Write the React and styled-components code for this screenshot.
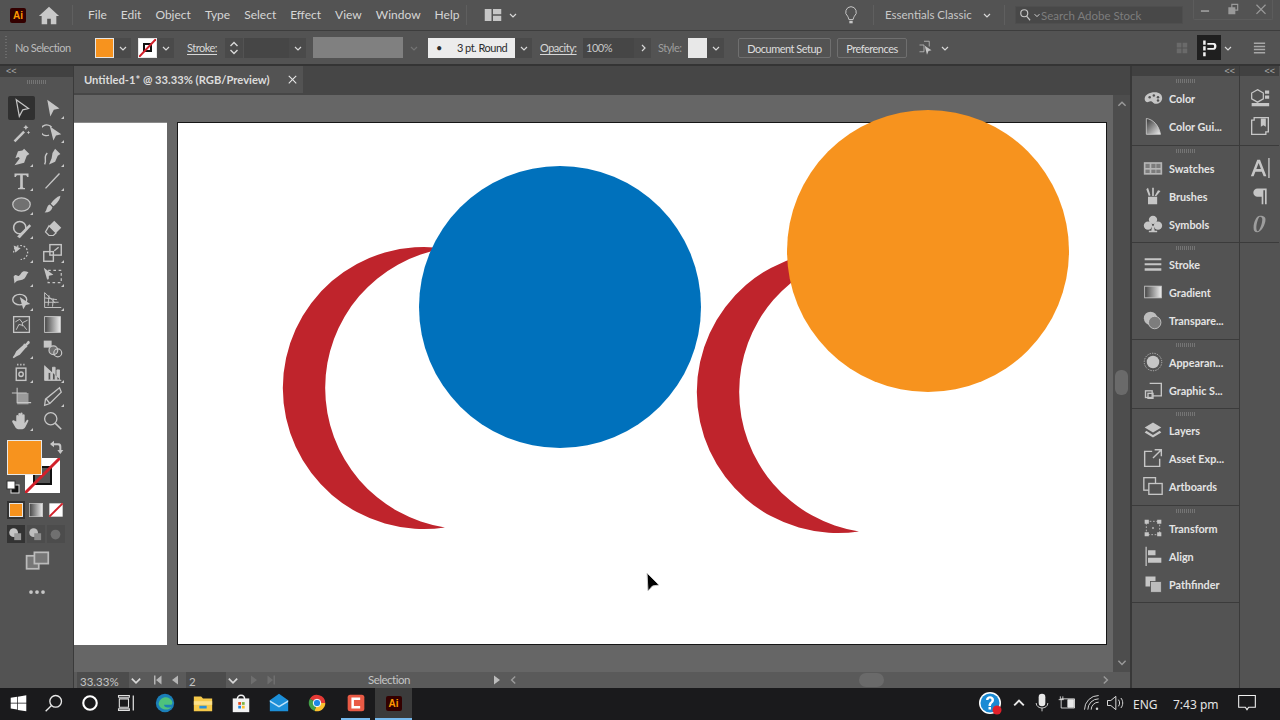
// illustrator workspace screenshot
import React from 'react'
import styled, { createGlobalStyle } from 'styled-components'

const Global = createGlobalStyle`
html, body { margin: 0; padding: 0; background: #535353; }
body { font-family: Lato, "Noto Sans", sans-serif; overflow: hidden; }
`
const Page = styled.div`
width: 1280px;
height: 720px;
display: flex;
flex-direction: column;
background: #535353;
color: #d0d0d0;
overflow: hidden;
`
const Icon = styled.svg`
width: ${p => p.$s || 20}px;
height: ${p => p.$s || 20}px;
flex: none;
color: ${p => p.$c || '#c6c6c6'};
margin-left: ${p => p.$ml || 0}px;
margin-top: ${p => p.$mt || 0}px;
`

/* menu bar */
const MenuBar = styled.div`
height: 30px;
flex: none;
display: flex;
align-items: center;
position: relative;
border-bottom: 1px solid #3d3d3d;
`
const AiLogo = styled.div`
width: 16px;
height: 15px;
margin-left: ${p => p.$ml ?? 10}px;
border-radius: 2px;
background: #330000;
color: #ff9a00;
font: bold 10px/15px "Liberation Sans", sans-serif;
text-align: center;
flex: none;
`
const Sep = styled.div`
width: 1px;
height: 20px;
background: #5f5f5f;
flex: none;
margin-left: ${p => p.$ml || 0}px;
`
const Menus = styled.div`
display: flex;
gap: 14px;
margin-left: 15px;
padding-bottom: 2px;
font-size: 12px;
color: #d6d6d6;
width: 378px;
flex: none;
`
const Workspace = styled.span`
font-size: 11.5px;
color: #c8c8c8;
margin-left: 11px;
padding-bottom: 2px;
width: 88px;
flex: none;
white-space: nowrap;
`
const SearchBox = styled.div`
width: 168px;
height: 18px;
margin-left: 10px;
flex: none;
background: #484848;
border: 1px solid #4e4e4e;
display: flex;
align-items: center;
padding-left: 3px;
box-sizing: border-box;
font-size: 11.5px;
color: #7d7d7d;
`
const WinBox = styled.div`
display: flex;
align-items: center;
gap: 14px;
margin-left: 10px;
padding: 0 4px 1px 4px;
height: 20px;
box-sizing: border-box;
margin-top: -10px;
border: 1px solid #5c5c5c;
border-top: 0;
border-radius: 0 0 2px 2px;
`

/* control bar */
const ControlBar = styled.div`
height: 33px;
flex: none;
display: flex;
align-items: center;
border-bottom: 2px solid #343434;
font-size: 11px;
letter-spacing: -0.5px;
`
const Grip = styled.div`
width: 2px;
height: 24px;
margin-left: 5px;
flex: none;
background: repeating-linear-gradient(#6c6c6c 0 1px, transparent 1px 3px);
`
const Label = styled.span`
margin-left: ${p => p.$ml || 0}px;
width: ${p => (p.$w ? p.$w + 'px' : 'auto')};
color: ${p => p.$c || '#bcbcbc'};
flex: none;
white-space: nowrap;
text-decoration: ${p => (p.$u ? 'underline' : 'none')};
text-underline-offset: 2px;
`
const StatusMode = styled(Label)`
font-size: 11.5px;
letter-spacing: -0.5px;
line-height: 20px;
`
const Swatch = styled.div`
width: ${p => p.$w || 19}px;
height: ${p => p.$h || 20}px;
margin-left: ${p => p.$ml || 0}px;
background: ${p => p.$bg};
border: ${p => (p.$flat ? '0' : '1px solid #e5e5e5')};
box-sizing: border-box;
flex: none;
position: relative;
overflow: hidden;
`
const Drop = styled.div`
width: ${p => p.$w || 17}px;
height: 20px;
margin-left: ${p => p.$ml || 0}px;
background: ${p => p.$bg || '#4a4a4a'};
display: flex;
align-items: center;
justify-content: center;
flex: none;
color: #d0d0d0;
`
const Field = styled.div`
width: ${p => p.$w}px;
height: 20px;
background: #464646;
color: #c8c8c8;
margin-left: ${p => p.$ml || 0}px;
padding-left: 3px;
box-sizing: border-box;
line-height: 20px;
flex: none;
`
const GrayBar = styled.div`
width: 90px;
height: 21px;
background: #808080;
margin-left: 7px;
flex: none;
`
const StrokeProfile = styled.div`
width: 87px;
height: 20px;
margin-left: 6px;
background: #ececec;
color: #2c2c2c;
display: flex;
align-items: center;
gap: 15px;
padding-left: 8px;
box-sizing: border-box;
flex: none;
`
const Btn = styled.div`
height: 20px;
width: ${p => p.$w}px;
margin-left: ${p => p.$ml || 0}px;
border: 1px solid #6f6f6f;
border-radius: 2px;
box-sizing: border-box;
text-align: center;
line-height: 19px;
color: #dedede;
flex: none;
`
const ActiveBox = styled.div`
width: 24px;
height: 25px;
background: #1f1f1f;
margin-left: 8px;
display: flex;
align-items: center;
justify-content: center;
flex: none;
`

/* main workspace */
const Main = styled.div`
flex: 1;
display: flex;
min-height: 0;
`
const Tools = styled.div`
width: 73px;
flex: none;
display: flex;
flex-direction: column;
align-items: center;
border-right: 1px solid #3a3a3a;
box-sizing: content-box;
`
const Strip = styled.div`
height: ${p => p.$h || 11}px;
width: 100%;
flex: none;
background: #414141;
color: #a8a8a8;
font: 9px/10px "Liberation Sans", sans-serif;
padding: 0 ${p => (p.$right ? 4 : 6)}px;
box-sizing: border-box;
text-align: ${p => (p.$right ? 'right' : 'left')};
`
const GripH = styled.div`
width: ${p => p.$w || 20}px;
height: 4px;
margin: ${p => p.$m || '2px auto 0'};
flex: none;
background: repeating-linear-gradient(90deg, #747474 0 1px, transparent 1px 2px);
`
const ToolGrid = styled.div`
display: grid;
grid-template-columns: 27px 27px;
grid-auto-rows: 24px;
column-gap: 4px;
margin-top: 12px;
`
const ToolCell = styled.div`
display: flex;
align-items: center;
justify-content: center;
position: relative;
background: ${p => (p.$on ? '#303030' : 'none')};
border-radius: 2px;
`
const Corner = styled.i`
position: absolute;
right: 2px;
bottom: 1px;
border-left: 3px solid transparent;
border-bottom: 3px solid #c8c8c8;
`
const ColorStack = styled.div`
width: 59px;
height: 58px;
margin-top: 8px;
position: relative;
flex: none;
`
const FillBox = styled.div`
position: absolute;
left: 0;
top: 0;
width: 35px;
height: 35px;
background: #f7931e;
border: 1px solid #e8e8e8;
box-sizing: border-box;
z-index: 2;
`
const StrokeBox = styled.div`
position: absolute;
left: 18px;
top: 18px;
width: 35px;
height: 35px;
background: #fff;
overflow: hidden;
`
const SwapArrow = styled.div`
position: absolute;
left: 41px;
top: 0;
`
const DefaultColors = styled.svg`
position: absolute;
left: -1px;
top: 40px;
`
const MiniRow = styled.div`
display: flex;
gap: 2px;
margin-top: ${p => p.$mt}px;
margin-right: 2px;
flex: none;
`
const MiniCell = styled.div`
width: 18px;
height: 18px;
display: flex;
align-items: center;
justify-content: center;
background: ${p => p.$bg || 'none'};
`

const Center = styled.div`
flex: 1;
display: flex;
flex-direction: column;
min-width: 0;
`
const TabRow = styled.div`
height: 29px;
flex: none;
background: #464646;
display: flex;
`
const Tab = styled.div`
width: 229px;
height: 27px;
background: #535353;
display: flex;
align-items: center;
justify-content: space-between;
padding: 0 6px 0 10px;
box-sizing: border-box;
font-size: 11.2px;
font-weight: 700;
color: #dcdcdc;
`
const DocRow = styled.div`
flex: 1;
display: flex;
min-height: 0;
`
const Canvas = styled.div`
flex: 1;
background: #666;
position: relative;
`
const Artboard = styled.div`
position: absolute;
top: 27px;
height: 523px;
left: ${p => p.$l}px;
width: ${p => p.$w}px;
background: #fff;
box-sizing: border-box;
border: ${p => (p.$edge ? '1px solid #161616' : '0')};
border-top: 1px solid ${p => (p.$edge ? '#161616' : '#8a8a8a')};
`
const Art = styled.svg`
position: absolute;
left: 0;
top: 0;
`
const VScroll = styled.div`
width: 17px;
flex: none;
background: #4d4d4d;
display: flex;
flex-direction: column;
align-items: center;
justify-content: space-between;
padding: 3px 0 4px;
box-sizing: border-box;
position: relative;
`
const VThumb = styled.div`
position: absolute;
top: 275px;
left: 2px;
width: 13px;
height: 25px;
border-radius: 6px;
background: #6a6a6a;
`
const StatusRow = styled.div`
height: 16px;
flex: none;
background: #5a5a5a;
display: flex;
align-items: center;
font-size: 11.5px;
color: #c4c4c4;
position: relative;
`
const StatusField = styled.div`
width: ${p => p.$w}px;
height: 16px;
margin-left: ${p => p.$ml || 0}px;
background: #4c4c4c;
line-height: 20px;
padding-left: 3px;
box-sizing: border-box;
overflow: hidden;
flex: none;
`
const HThumb = styled.div`
position: absolute;
left: 785px;
top: 1px;
width: 25px;
height: 14px;
border-radius: 7px;
background: #6a6a6a;
`

/* right dock */
const Dock = styled.div`
width: 148px;
flex: none;
border-left: 2px solid #383838;
display: flex;
`
const DockCol = styled.div`
width: ${p => p.$w}px;
flex: none;
display: flex;
flex-direction: column;
border-right: ${p => (p.$line ? '1px solid #3a3a3a' : '0')};
`
const PanelGroup = styled.div`
height: ${p => p.$h}px;
flex: none;
position: relative;
padding-top: ${p => p.$pad}px;
box-sizing: border-box;
border-bottom: 1px solid #3b3b3b;
`
const GroupGrip = styled(GripH)`
position: absolute;
top: 3px;
left: 0;
right: 0;
margin: 0 auto;
`
const PanelItem = styled.div`
height: 28px;
display: flex;
align-items: center;
font-size: 10.8px;
font-weight: 700;
color: #e4e4e4;
white-space: nowrap;
`
const PanelIcon = styled.div`
width: 22px;
margin: 0 5px 0 10px;
display: flex;
justify-content: center;
flex: none;
`
const DockIcon = styled.div`
height: 28px;
display: flex;
align-items: center;
justify-content: center;
`

/* taskbar */
const Taskbar = styled.div`
height: 32px;
flex: none;
background: #1a1a1c;
display: flex;
align-items: center;
color: #e8e8e8;
position: relative;
`
const TaskSlot = styled.div`
width: ${p => p.$w || 38}px;
height: 32px;
flex: none;
margin-left: ${p => p.$ml || 0}px;
display: flex;
align-items: center;
justify-content: center;
box-sizing: border-box;
background: ${p => (p.$on ? '#3b3b3b' : 'none')};
border-bottom: 2px solid ${p => (p.$line ? '#76b9ed' : 'transparent')};
`
const Tray = styled.span`
font-size: ${p => p.$fs || 12}px;
font-family: "Noto Sans", sans-serif;
margin-left: ${p => p.$ml || 0}px;
width: ${p => p.$w}px;
flex: none;
white-space: nowrap;
color: #e4e4e4;
`

const Chevron = ({ s = 10, c = '#d8d8d8', dir = 'down', ml }) => {
  const d = { down: 'M2 4l3 3 3-3', up: 'M2 6.5l3-3 3 3', right: 'M4 2l3 3-3 3', left: 'M6 2L3 5l3 3' }[dir]
  return (
    <Icon $s={s} $ml={ml} viewBox="0 0 10 10" fill="none" stroke={c} strokeWidth="1.2"><path d={d} /></Icon>
  )
}

const G = ({ children, s = 20, box = 24, ...rest }) => (
  <Icon $s={s} viewBox={`0 0 ${box} ${box}`} fill="currentColor" stroke="none" {...rest}>{children}</Icon>
)
const line = { fill: 'none', stroke: 'currentColor', strokeWidth: 1.6 }

const toolIcons = [
  [<path d="M6 2l14 10-6.500 1.500L9.500 21z" fill="none" stroke="currentColor" strokeWidth="1.400" />, true, false],
  [<path d="M6 2l14 10-6.500 1.500L9.500 21z" />, false, true],
  [<g><path d="M3 21L14 10l2 2L5 23z" /><path d="M17 3l1 2 2 1-2 1-1 2-1-2-2-1 2-1zM20 10l.7 1.300 1.300.7-1.300.7-.7 1.300-.7-1.300-1.300-.7 1.300-.7z" /></g>, false, false],
  [<g><path d="M11 6a7 6 0 1 0-3 9" {...line} /><path d="M9 5l13 9-6 1.500L13 21z" /></g>, false, true],
  [<path d="M15 3l6 6-3 2-3 8-11 3 6-8-1.500-1.500L5 14l3-8 5-1z" />, false, true],
  [<g><path d="M15 3l6 6-3 2-3 7-7 3 3-7 1-6z" /><path d="M6 8c-5 5 0 7-3 13" {...line} /></g>, false, true],
  [<path d="M4 4h16v4h-1.500c-.5-1.500-1-2-2-2H13.500v13c0 1 .5 1.500 2.500 1.500V22H8v-1.500c2 0 2.500-.5 2.500-1.500V6H7.500c-1 0-1.500.5-2 2H4z" />, false, true],
  [<path d="M4 21L20 4" {...line} />, false, true],
  [<ellipse cx="12" cy="12" rx="10" ry="7.500" fill="#717171" stroke="currentColor" strokeWidth="1.400" />, false, true],
  [<path d="M21 2c0 4-4 9-8 12l-3-3c3-4 7-8 11-9zM9 12l3 3c-1 4-4 6-9 6 3-2 2-8 6-9z" />, false, false],
  [<g><circle cx="10" cy="11" r="7" fill="none" stroke="currentColor" strokeWidth="1.800" /><path d="M7 21L21 7l2 2L10 23z" /></g>, false, true],
  [<g><path d="M14 3l8 8-6 6-8-8z" /><path d="M8 9l8 8-3 3H8l-4-4z" fill="none" stroke="currentColor" strokeWidth="1.400" /></g>, false, false],
  [<g><path d="M3 12a8 8 0 1 1 8 8" fill="none" stroke="currentColor" strokeWidth="1.400" strokeDasharray="2 2" /><path d="M3 4l2 8 6-5z" /></g>, false, true],
  [<g><rect x="2" y="11" width="11" height="11" {...line} /><rect x="9" y="3" width="13" height="12" {...line} /><path d="M14 10l5-4" {...line} /></g>, false, true],
  [<path d="M3 12c4-5 4 3 8-3 3-4 5-3 9-2-3 3-3 7-6 8-3 2-7 0-10 5z" />, false, true],
  [<g><rect x="7" y="5" width="15" height="14" fill="none" stroke="currentColor" strokeWidth="1.400" strokeDasharray="3 3" /><path d="M2 2l11 8-5 1-2 5z" /></g>, false, true],
  [<g><ellipse cx="10" cy="11" rx="8" ry="6" {...line} /><path d="M10 8l12 8-5 1-3 5z" /></g>, false, true],
  [<path d="M3 3v17h19M3 3c5 5 10 9 12 12M3 9l14 2M3 14h16M8 6l-1 12M13 10l-1 9" fill="none" stroke="currentColor" strokeWidth="1.100" />, false, true],
  [<g><rect x="3" y="3" width="18" height="18" fill="none" stroke="currentColor" strokeWidth="1.500" /><path d="M5 9l5-3 3 4 6-3M6 18l3-6 5 1 4 5M13 10v4" fill="none" stroke="currentColor" strokeWidth="1.100" /></g>, false, false],
  [<g><defs><linearGradient id="grd"><stop offset="0" stopColor="#444" /><stop offset="1" stopColor="#eee" /></linearGradient></defs><rect x="3" y="3" width="18" height="18" fill="url(#grd)" stroke="#ccc" /></g>, false, false],
  [<path d="M20 3c2 1 2 3 0 4l-2 2 1 1-2 1-7 8-4 2-3 2-1-1 2-3 2-4 8-7 1-2 1 1 2-2c1-1 1-2 2-2z" />, false, true],
  [<g><rect x="2" y="3" width="9" height="8" /><circle cx="13" cy="14" r="5" fill="#717171" stroke="currentColor" strokeWidth="1.400" /><circle cx="18" cy="17" r="4.500" fill="none" stroke="currentColor" strokeWidth="1.400" /></g>, false, false],
  [<g><rect x="6" y="7" width="11" height="14" {...line} /><circle cx="11.500" cy="14" r="2.500" {...line} /><path d="M7 2h1.500v2H7zM10.500 2H12v2h-1.500zM14 2h1.500v2H14z" /></g>, false, true],
  [<path d="M3 4v17h19M7 20V12h3v8M12 20V6h3v14M17 20V9h3v11" fill="currentColor" stroke="currentColor" />, false, true],
  [<g><rect x="7" y="8" width="13" height="13" fill="#9a9a9a" /><path d="M7 2v17h16M1 8h17" fill="none" stroke="currentColor" strokeWidth="1.200" /></g>, false, false],
  [<path d="M20 2l2 5-13 13-6 2 1-7zM5 15l4 5" fill="none" stroke="currentColor" strokeWidth="1.500" />, false, true],
  [<path d="M6 13V7a1.200 1.200 0 0 1 2.400 0v4V4.500a1.200 1.200 0 0 1 2.400 0V11V4a1.200 1.200 0 0 1 2.400 0v7V6a1.200 1.200 0 0 1 2.400 0v9l2-3c1-1.500 3-.5 2 1l-3 6c-1 2-3 3-5 3h-2c-2 0-4-1-5-3l-3-5c-1-2 1-3 2-2z" />, false, true],
  [<g><circle cx="10" cy="10" r="7" fill="none" stroke="currentColor" strokeWidth="1.500" /><path d="M15 15l7 7" stroke="currentColor" strokeWidth="1.800" /></g>, false, false],
]

const dockGroups = [
  { h: 70, pad: 8, items: [
    ['Color', <G key="i"><path d="M2 13c0-5 6-8 12-8s9 3 9 7-3 7-8 7c-3 0-3-3-6-3-2 0-2 1-4 1s-3-2-3-4z" /><g fill="#535353"><circle cx="8" cy="11" r="1.500" /><circle cx="13" cy="9" r="1.500" /><circle cx="18" cy="11" r="1.500" /><circle cx="18" cy="15" r="1.500" /></g></G>],
    ['Color Gui...', <G key="i"><defs><linearGradient id="cg" x1="0" y1="0" x2="1" y2="1"><stop offset="0" stopColor="#333" /><stop offset="1" stopColor="#eee" /></linearGradient></defs><path d="M4 3c8 1 15 8 17 19H4z" fill="url(#cg)" stroke="#ccc" /></G>],
  ] },
  { h: 97, pad: 8, items: [
    ['Swatches', <G key="i"><rect x="1" y="5" width="22" height="15" fill="#b5b5b5" /><g fill="#7b7b7b"><rect x="3" y="7" width="5" height="5" /><rect x="10" y="7" width="5" height="5" /><rect x="16" y="7" width="5" height="5" /><rect x="3" y="14" width="5" height="4" /><rect x="10" y="14" width="5" height="4" /><rect x="16" y="14" width="5" height="4" /></g></G>],
    ['Brushes', <G key="i"><path d="M6 13h11v9H6zM7 12L4 4l2-2 3 9zM11 12V2h2v10zM14 12l4-7 3 1-5 6z" /></G>],
    ['Symbols', <G key="i"><circle cx="12" cy="7" r="5" /><circle cx="6" cy="14" r="5" /><circle cx="18" cy="14" r="5" /><path d="M11 14h2l1 6h3v2H7v-2h3z" /></G>],
  ] },
  { h: 97, pad: 7, items: [
    ['Stroke', <G key="i"><path d="M2 5h20v2.500H2zM2 11h20v2.500H2zM2 17h20v3H2z" /></G>],
    ['Gradient', <G key="i"><defs><linearGradient id="gr2"><stop offset="0" stopColor="#444" /><stop offset="1" stopColor="#eee" /></linearGradient></defs><rect x="2" y="5" width="20" height="14" fill="url(#gr2)" stroke="#ccc" /></G>],
    ['Transpare...', <G key="i"><circle cx="9" cy="10" r="8" fill="#bdbdbd" /><circle cx="14" cy="15" r="7.500" fill="#7d7d7d" stroke="#ccc" /></G>],
  ] },
  { h: 69, pad: 8, items: [
    ['Appearan...', <G key="i"><circle cx="12" cy="12" r="7.500" /><circle cx="12" cy="12" r="10.500" fill="none" stroke="currentColor" strokeDasharray="1.500 1.500" /></G>],
    ['Graphic S...', <G key="i"><path d="M8 4h14v15H12" {...line} fill="none" /><rect x="3" y="13" width="8" height="8" {...line} /><rect x="6" y="16" width="6" height="6" {...line} /></G>],
  ] },
  { h: 97, pad: 7, items: [
    ['Layers', <G key="i"><path d="M12 3l10 6-10 6L2 9z" /><path d="M4 13l8 5 8-5 2 2-10 6L2 15z" /></G>],
    ['Asset Exp...', <G key="i"><path d="M11 4H2v18h18v-9M14 2h8v8M22 2L12 12" fill="none" stroke="currentColor" strokeWidth="1.700" /></G>],
    ['Artboards', <G key="i"><rect x="1" y="2" width="14" height="15" {...line} /><rect x="7" y="9" width="16" height="13" fill="#535353" stroke="currentColor" strokeWidth="1.600" /></G>],
  ] },
  { h: 97, pad: 8, items: [
    ['Transform', <G key="i"><rect x="4" y="4" width="16" height="16" fill="none" stroke="currentColor" strokeDasharray="2 2" /><path d="M2 2h5v5H2zM17 2h5v5h-5zM2 17h5v5H2zM17 17h5v5h-5zM11 11h2v2h-2z" /></G>],
    ['Align', <G key="i"><path d="M3 1h1.500v23H3zM6 5h9v6H6zM6 14h16v6H6z" /></G>],
    ['Pathfinder', <G key="i"><rect x="3" y="3" width="12" height="12" /><rect x="9" y="9" width="13" height="13" fill="#bdbdbd" stroke="#535353" /></G>],
  ] },
]

const taskIcons = [
  <G s={22}><circle cx="12" cy="12" r="10" fill="#1b7fb8" /><path d="M5 13c1-6 7-9 12-6 3 2 4 5 2 7h-8c0 3 4 4 8 2-3 5-12 4-14-3z" fill="#4ec27c" /></G>,
  <G s={22}><path d="M2 5h8l2 2h10v14H2z" fill="#f6c94a" /><path d="M2 10h20v4H2z" fill="#fbe08a" /><rect x="8" y="15" width="8" height="3" fill="#2a90d8" /></G>,
  <G s={22}><path d="M3 7h18v15H3z" fill="#f2f2f2" /><path d="M8 8c0-6 8-6 8 0" fill="none" stroke="#f2f2f2" strokeWidth="1.600" /><rect x="9" y="11" width="3" height="3" fill="#e64a19" /><rect x="13" y="11" width="3" height="3" fill="#7cb342" /><rect x="9" y="15" width="3" height="3" fill="#1e88e5" /><rect x="13" y="15" width="3" height="3" fill="#fbc02d" /></G>,
  <G s={22}><path d="M2 9l10-7 10 7v12H2z" fill="#1c8fd8" /><path d="M2 9l10 6 10-6v2l-10 6-10-6z" fill="#bfe3fa" /></G>,
  <G s={20}><path d="M12 12L3.500 7A10 10 0 0 1 22 12z" fill="#e53935" /><path d="M12 12h10a10 10 0 0 1-13 9.500z" fill="#fbc02d" /><path d="M12 12l-3 9.500A10 10 0 0 1 3.500 7z" fill="#43a047" /><circle cx="12" cy="12" r="4.500" fill="#1e88e5" stroke="#fff" strokeWidth="1.200" /></G>,
]

function App() {
  return (
    <Page>
      <Global />
      <MenuBar>
        <AiLogo>Ai</AiLogo>
        <G s={22} $ml={12} $c="#c8c8c8"><path d="M12 3L1 13h3v9h6v-6h4v6h6v-9h3z" /></G>
        <Sep $ml={12} />
        <Menus>
          {['File', 'Edit', 'Object', 'Type', 'Select', 'Effect', 'View', 'Window', 'Help'].map(m => <span key={m}>{m}</span>)}
        </Menus>
        <Sep />
        <G s={18} $ml={17}><path d="M1 4h9v16H1zM12 4h11v7H12zM12 13h11v7H12z" /></G>
        <Chevron ml={6} />
        <G s={20} $ml={323}><path d="M12 2a6.500 6.500 0 0 0-4 11.500c1 1 1 3 1.500 4h5c.5-1 .5-3 1.500-4A6.500 6.500 0 0 0 12 2z" fill="none" stroke="currentColor" strokeWidth="1.200" /><path d="M10 19h4v3h-4z" /></G>
        <Sep $ml={12} />
        <Workspace>Essentials Classic</Workspace>
        <Chevron ml={9} />
        <Sep $ml={12} />
        <SearchBox>
          <G s={14}><circle cx="9" cy="9" r="6" fill="none" stroke="currentColor" strokeWidth="2" /><path d="M13 14l6 7" stroke="currentColor" strokeWidth="2" /></G>
          <Chevron s={8} />
          Search Adobe Stock
        </SearchBox>
        <WinBox>
          <G s={14} $c="#9a9a9a"><rect x="5" y="14" width="14" height="3" /></G>
          <G s={14} $c="#9a9a9a"><path d="M9 3h12v12h-5v6H4V9h5zm2 2v4h5v4h3V5z" fillRule="evenodd" /></G>
          <G s={14} $c="#9a9a9a"><path d="M5 4l7 7 7-7 1.500 1.500-7 7 7 7L19 21l-7-7-7 7-1.500-1.500 7-7-7-7z" /></G>
        </WinBox>
      </MenuBar>

      <ControlBar>
        <Grip />
        <Label $ml={8} $w={57}>No Selection</Label>
        <Swatch $ml={23} $bg="#f7931e" />
        <Drop><Chevron /></Drop>
        <Swatch $ml={7} $bg="#fff">
          <svg width="17" height="18" viewBox="0 0 17 18"><rect x="5" y="5" width="7" height="7" fill="none" stroke="#111" strokeWidth="2" /><path d="M0 18L17 0" stroke="#d2202a" strokeWidth="2" /></svg>
        </Swatch>
        <Drop><Chevron /></Drop>
        <Label $ml={13} $w={34} $u $c="#d8d8d8">Stroke:</Label>
        <Drop $ml={4} $w={18}><Icon $s={14} viewBox="0 0 10 10" fill="none" stroke="#d8d8d8"><path d="M2.500 3.500L5 1l2.500 2.500M2.500 6.500L5 9l2.500-2.500" /></Icon></Drop>
        <Field $w={45} $ml={1} />
        <Drop><Chevron /></Drop>
        <GrayBar />
        <Drop $bg="none" $ml={2}><Chevron c="#737373" /></Drop>
        <StrokeProfile><span>•</span><span>3 pt. Round</span></StrokeProfile>
        <Drop><Chevron /></Drop>
        <Label $ml={8} $w={37} $u $c="#d8d8d8">Opacity:</Label>
        <Field $w={51} $ml={6}>100%</Field>
        <Drop><Chevron dir="right" /></Drop>
        <Label $ml={7} $w={30} $c="#9e9e9e">Style:</Label>
        <Swatch $w={19} $bg="#e8e8e8" $flat />
        <Drop><Chevron /></Drop>
        <Btn $ml={14} $w={93}>Document Setup</Btn>
        <Btn $ml={6} $w={70}>Preferences</Btn>
        <G s={18} $ml={11}><path d="M8 3h7v7M2 8h6v9H2" fill="none" stroke="currentColor" /><path d="M9 9l9 6-4 1-2 5z" /></G>
        <Chevron ml={4} />
        <G s={14} $c="#6a6a6a" $ml={225}><path d="M3 3h8v8H3zM13 3h8v8h-8zM3 13h8v8H3zM13 13h8v8h-8z" /></G>
        <ActiveBox>
          <G s={20} $c="#f2f2f2"><path d="M5 3h3v5H5zM5 10h3v5H5zM5 17h3v5H5zM10 6h8c4 0 4 8 0 8h-8v-2h7c1.500 0 1.500-4 0-4h-7z" /></G>
        </ActiveBox>
        <Chevron ml={2} />
        <G s={15} $c="#a8a8a8" $ml={19}><path d="M3 4h18v2.500H3zM3 9h18v2.500H3zM3 14h18v2.500H3zM3 19h18v2.500H3z" /></G>
      </ControlBar>

      <Main>
        <Tools>
          <Strip>&lt;&lt;</Strip>
          <GripH $w={20} $m="3px auto 0" />
          <ToolGrid>
            {toolIcons.map(([el, on, corner], i) => (
              <ToolCell key={i} $on={on}>
                <G s={21}>{el}</G>
                {corner && <Corner />}
              </ToolCell>
            ))}
          </ToolGrid>
          <ColorStack>
            <FillBox />
            <StrokeBox>
              <svg width="35" height="35" viewBox="0 0 35 35"><rect x="9" y="9" width="17" height="17" fill="#555" stroke="#111" strokeWidth="2" /><path d="M0 35L35 0" stroke="#d2202a" strokeWidth="3" /></svg>
            </StrokeBox>
            <SwapArrow><G s={16}><path d="M5 5h11c3 0 4 2 4 5v5h3l-4.500 6L14 15h3v-4c0-2-1-3-2-3H5z" /><path d="M9 1v10L3 6z" /></G></SwapArrow>
            <DefaultColors width="14" height="14" viewBox="0 0 14 14"><rect x="5" y="5" width="8" height="8" fill="#111" stroke="#ddd" /><rect x="1" y="1" width="8" height="8" fill="#fff" stroke="#333" /></DefaultColors>
          </ColorStack>
          <MiniRow $mt={3}>
            <MiniCell $bg="#333"><Swatch $w={14} $h={14} $bg="#f7931e" /></MiniCell>
            <MiniCell><G s={16}><rect x="2" y="2" width="20" height="20" fill="url(#grd)" stroke="#ccc" /></G></MiniCell>
            <MiniCell><G s={16}><rect x="2" y="2" width="20" height="20" fill="#fff" /><path d="M2 22L22 2" stroke="#d2202a" strokeWidth="3" /></G></MiniCell>
          </MiniRow>
          <MiniRow $mt={6}>
            <MiniCell $bg="#333"><G s={15}><circle cx="9" cy="9" r="7" /><rect x="10" y="10" width="11" height="11" fill="#9a9a9a" /></G></MiniCell>
            <MiniCell $bg="#4c4c4c"><G s={15}><circle cx="9" cy="9" r="7" fill="#bdbdbd" /><rect x="10" y="10" width="11" height="11" fill="#8a8a8a" /></G></MiniCell>
            <MiniCell $bg="#4c4c4c"><G s={13} $c="#707070"><circle cx="12" cy="12" r="9" /></G></MiniCell>
          </MiniRow>
          <G s={26} $mt={5} box={30}><rect x="3" y="9" width="14" height="15" fill="#777" stroke="#bbb" strokeWidth="2" /><rect x="12" y="5" width="16" height="13" fill="#777" stroke="#bbb" strokeWidth="2" /></G>
          <G s={18} $mt={9}><circle cx="4" cy="12" r="2.500" /><circle cx="12" cy="12" r="2.500" /><circle cx="20" cy="12" r="2.500" /></G>
        </Tools>

        <Center>
          <TabRow>
            <Tab>
              <span>Untitled-1* @ 33.33% (RGB/Preview)</span>
              <G s={9} $c="#e8e8e8"><path d="M3 1l9 9 9-9 2 2-9 9 9 9-2 2-9-9-9 9-2-2 9-9-9-9z" /></G>
            </Tab>
          </TabRow>
          <DocRow>
            <Canvas>
              <Artboard $l={0} $w={93} />
              <Artboard $l={103} $w={930} $edge />
              <Art width="1039" height="577" viewBox="74 95 1039 577">
                <path d="M445 248.600A141 141 0 1 0 445 527.400A141 141 0 0 1 445 248.600z" fill="#bf242c" />
                <path d="M859 252.600A141 141 0 1 0 859 531.400A141 141 0 0 1 859 252.600z" fill="#bf242c" />
                <circle cx="560" cy="307" r="141" fill="#0071bc" />
                <circle cx="928" cy="251" r="141" fill="#f7931e" />
                <path d="M647 573L659 585L652.500 586L648 591z" fill="#000" stroke="#ccc" strokeWidth="1" />
              </Art>
            </Canvas>
            <VScroll>
              <Chevron s={12} c="#9a9a9a" dir="up" />
              <VThumb />
              <Chevron s={12} c="#9a9a9a" />
            </VScroll>
          </DocRow>
          <StatusRow>
            <StatusField $w={52} $ml={3}>33.33%</StatusField>
            <Chevron s={14} />
            <G s={12} $c="#b4b4b4" $ml={9}><path d="M4 3h3v18H4zM19 3v18L8 12z" /></G>
            <G s={12} $c="#b4b4b4" $ml={5}><path d="M18 3v18L6 12z" /></G>
            <StatusField $w={40} $ml={5}>2</StatusField>
            <Chevron s={14} />
            <G s={12} $c="#6e6e6e" $ml={8}><path d="M6 3v18l12-9z" /></G>
            <G s={12} $c="#6e6e6e" $ml={5}><path d="M5 3v18l11-9zM17 3h3v18h-3z" /></G>
            <StatusMode $ml={91} $w={40} $c="#c4c4c4">Selection</StatusMode>
            <G s={12} $c="#bcbcbc" $ml={83}><path d="M6 3v18l12-9z" /></G>
            <Chevron s={12} c="#9a9a9a" dir="left" ml={5} />
            <HThumb />
            <Chevron s={12} c="#9a9a9a" dir="right" ml={579} />
          </StatusRow>
        </Center>

        <Dock>
          <DockCol $w={107} $line>
            <Strip $right $h={10}>&lt;&lt;</Strip>
            {dockGroups.map((g, i) => (
              <PanelGroup key={i} $h={g.h} $pad={g.pad}>
                <GroupGrip $w={20} />
                {g.items.map(([name, icon]) => (
                  <PanelItem key={name}>
                    <PanelIcon>{icon}</PanelIcon>
                    {name}
                  </PanelItem>
                ))}
              </PanelGroup>
            ))}
          </DockCol>
          <DockCol $w={39}>
            <Strip $right $h={10}>&lt;&lt;</Strip>
            <PanelGroup $h={70} $pad={8}>
              <DockIcon><G s={20}><path d="M9 2l7 4v7l-7 4-7-4V6z" fill="none" stroke="currentColor" strokeWidth="1.500" /><path d="M18 3h5v4h-5zM18 9h5v4h-5zM2 18h21v4H2z" /></G></DockIcon>
              <DockIcon><G s={20}><path d="M2 5h3v-3h17v17h-3v3H2z" fill="none" stroke="currentColor" strokeWidth="1.600" /><path d="M13 3h6v10l-3-2-3 2z" /></G></DockIcon>
            </PanelGroup>
            <PanelGroup $h={97} $pad={8}>
              <DockIcon><G s={22}><path d="M9 3h3l7 18h-3l-2-5H7l-2 5H2zm4 10l-2.500-6.500L8 13z" fillRule="evenodd" /><path d="M21 1h1.500v22H21z" /></G></DockIcon>
              <DockIcon><G s={20}><path d="M9 3h11v19h-2V5h-2v17h-2V13H9a5 5 0 0 1 0-10z" /></G></DockIcon>
              <DockIcon><G s={22} $c="#9d9d9d"><path d="M12 3c5 0 6 2 6 4 0 6-5 14-9 14-3 0-4-2-4-5 0-6 3-13 7-13zm0 1c-2 0-4 8-4 12 0 2 .5 4 1.500 4 2 0 5-9 5-13 0-2-1-3-2.500-3z" fillRule="evenodd" /></G></DockIcon>
            </PanelGroup>
          </DockCol>
        </Dock>
      </Main>

      <Taskbar>
        <TaskSlot $w={36}><G s={17} $c="#fff"><path d="M1 4l9-1.500V11H1zM11 2.300L23 .5V11H11zM1 12h9v8.500L1 19zM11 12h12v11l-12-1.700z" /></G></TaskSlot>
        <TaskSlot $w={36}><G s={20} $c="#e8e8e8"><circle cx="14" cy="10" r="7" fill="none" stroke="currentColor" strokeWidth="1.600" /><path d="M9 15l-7 7" stroke="currentColor" strokeWidth="1.600" /></G></TaskSlot>
        <TaskSlot $w={36}><G s={18} $c="#fff"><circle cx="12" cy="12" r="9" fill="none" stroke="currentColor" strokeWidth="2.800" /></G></TaskSlot>
        <TaskSlot $w={36}><G s={20} $c="#e0e0e0"><path d="M3 3h13v2H3zM3 19h13v2H3zM4 7h11v10H4z" fill="none" stroke="currentColor" strokeWidth="1.300" /><path d="M20 3h1.500v18H20z" /></G></TaskSlot>
        {taskIcons.map((el, i) => (
          <TaskSlot key={i} $ml={i === 0 ? 2 : 0}>{el}</TaskSlot>
        ))}
        <TaskSlot $w={29} $ml={5} $line>
          <G s={20}><rect x="2" y="2" width="20" height="20" rx="3" fill="#e95a45" /><path d="M17 7H8v10h9" fill="none" stroke="#fff" strokeWidth="3" /></G>
        </TaskSlot>
        <TaskSlot $w={37} $ml={5} $on $line><AiLogo $ml={0}>Ai</AiLogo></TaskSlot>
        <TaskSlot $w={26} $ml={565}>
          <G s={24}><circle cx="12" cy="12" r="11" fill="#fff" /><circle cx="12" cy="12" r="9.500" fill="#1a8ad4" /><path d="M8 9c0-5 8-5 8 0 0 3-3 3-3 6h-2.500c0-4 3-4 3-6 0-2-3-2-3 0zM10.500 16h2.500v2.500h-2.500z" fill="#fff" /><circle cx="19" cy="19" r="4.500" fill="#e0202a" /></G>
        </TaskSlot>
        <TaskSlot $w={24} $ml={4}><Chevron s={16} c="#e8e8e8" dir="up" /></TaskSlot>
        <TaskSlot $w={22}><G s={20} $c="#e8e8e8"><rect x="8" y="1" width="8" height="15" rx="4" /><path d="M5 12c0 8 14 8 14 0M12 18v4" fill="none" stroke="currentColor" /></G></TaskSlot>
        <TaskSlot $w={27}><G s={20} $c="#e8e8e8"><path d="M5 7h16v11H5z" fill="none" stroke="currentColor" /><path d="M13 8h7v9h-7zM4 4v4M7 4v4M2 8h6" stroke="currentColor" /></G></TaskSlot>
        <TaskSlot $w={24}><G s={20} $c="#cfcfcf"><path d="M3 20a17 17 0 0 1 17-17M7 20a13 13 0 0 1 13-13M11 20a9 9 0 0 1 9-9" fill="none" stroke="currentColor" strokeWidth="1.200" /><circle cx="18" cy="19" r="1.500" /></G></TaskSlot>
        <TaskSlot $w={22}><G s={20} $c="#e8e8e8"><path d="M3 9h4l6-5v16l-6-5H3z M16 8c2 2 2 6 0 8M19 6c3 3 3 9 0 12" fill="none" stroke="currentColor" strokeWidth="1.100" /></G></TaskSlot>
        <Tray $ml={7} $w={40}>ENG</Tray>
        <Tray $ml={0} $w={50}>7:43 pm</Tray>
        <TaskSlot $w={24} $ml={12}><G s={20} $c="#f0f0f0"><path d="M2 3h20v14H14l-2 3-2-3H2z" fill="none" stroke="currentColor" strokeWidth="1.300" /></G></TaskSlot>
      </Taskbar>
    </Page>
  )
}

export default App
